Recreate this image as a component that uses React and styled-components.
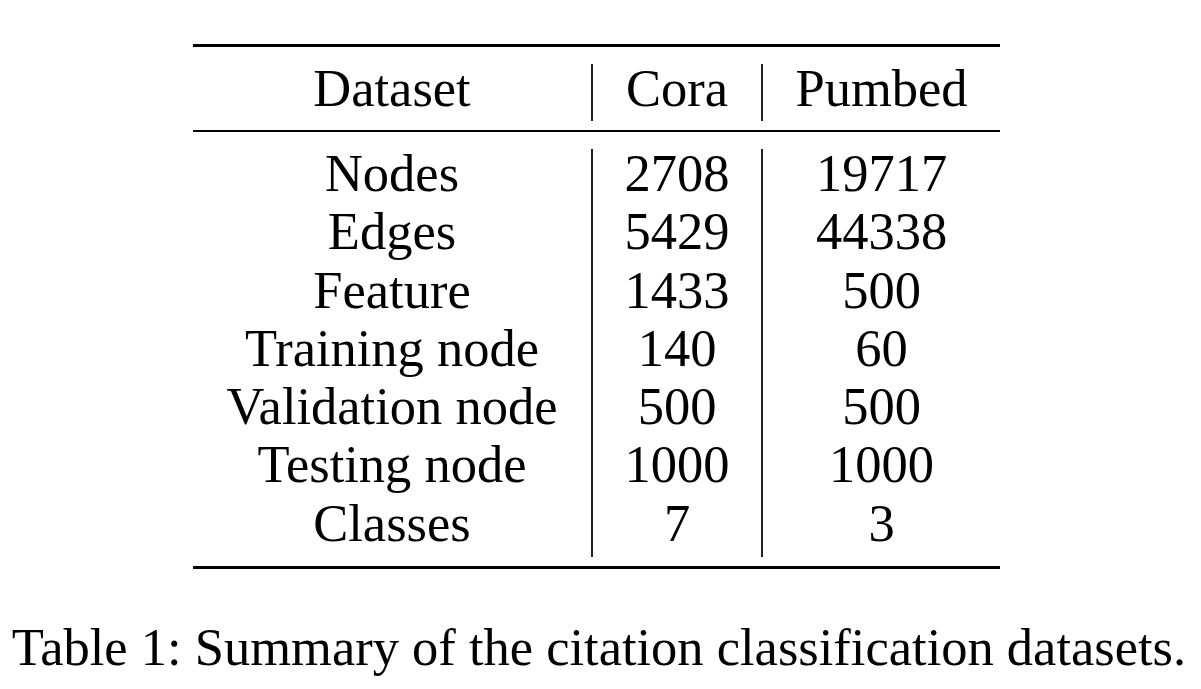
import styled, { createGlobalStyle } from "styled-components";

const GlobalStyle = createGlobalStyle`
  html, body {
    margin: 0;
    padding: 0;
    background: #fff;
  }
  body {
    font-family: "Liberation Serif", "Times New Roman", serif;
    color: #000;
  }
`;

const Page = styled.div`
  width: 1201px;
  height: 689px;
  padding-top: 44px;
  box-sizing: border-box;
  display: flex;
  flex-direction: column;
  align-items: flex-start;
  background: #fff;
  overflow: hidden;
`;

const Table = styled.div`
  margin-left: 193px;
  width: 807px;
  display: flex;
  flex-direction: column;
`;

const Rule = styled.div`
  height: ${(p) => p.$thick}px;
  background: #000;
  margin-top: ${(p) => p.$above || 0}px;
  margin-bottom: ${(p) => p.$below || 0}px;
`;

const Grid = styled.div`
  display: grid;
  grid-template-columns: 398px 170px 239px;
`;

const Cell = styled.div`
  box-sizing: border-box;
  height: ${(p) => p.$h}px;
  padding-bottom: ${(p) => p.$h - 48}px;
  line-height: 48px;
  font-size: 52.5px;
  text-align: center;
  white-space: nowrap;
  border-left: ${(p) => (p.$line ? "2px solid #222" : "none")};
`;

const Caption = styled.div`
  width: 100%;
  margin-top: 54px;
  padding-right: 3px;
  box-sizing: border-box;
  font-size: 52.5px;
  line-height: 48px;
  text-align: center;
  white-space: nowrap;
`;

const header = ["Dataset", "Cora", "Pumbed"];

const rows = [
  ["Nodes", "2708", "19717"],
  ["Edges", "5429", "44338"],
  ["Feature", "1433", "500"],
  ["Training node", "140", "60"],
  ["Validation node", "500", "500"],
  ["Testing node", "1000", "1000"],
  ["Classes", "7", "3"],
];

export default function App() {
  return (
    <Page>
      <GlobalStyle />
      <Table>
        <Rule $thick={3} $below={17} />
        <Grid>
          {header.map((h, i) => (
            <Cell key={h} $h={57} $line={i > 0}>
              {h}
            </Cell>
          ))}
        </Grid>
        <Rule $thick={2} $above={9} $below={17} />
        <Grid>
          {rows.map((r) =>
            r.map((v, i) => (
              <Cell key={r[0] + i} $h={58.3} $line={i > 0}>
                {v}
              </Cell>
            ))
          )}
        </Grid>
        <Rule $thick={3} $above={9} />
      </Table>
      <Caption>Table 1: Summary of the citation classification datasets.</Caption>
    </Page>
  );
}
